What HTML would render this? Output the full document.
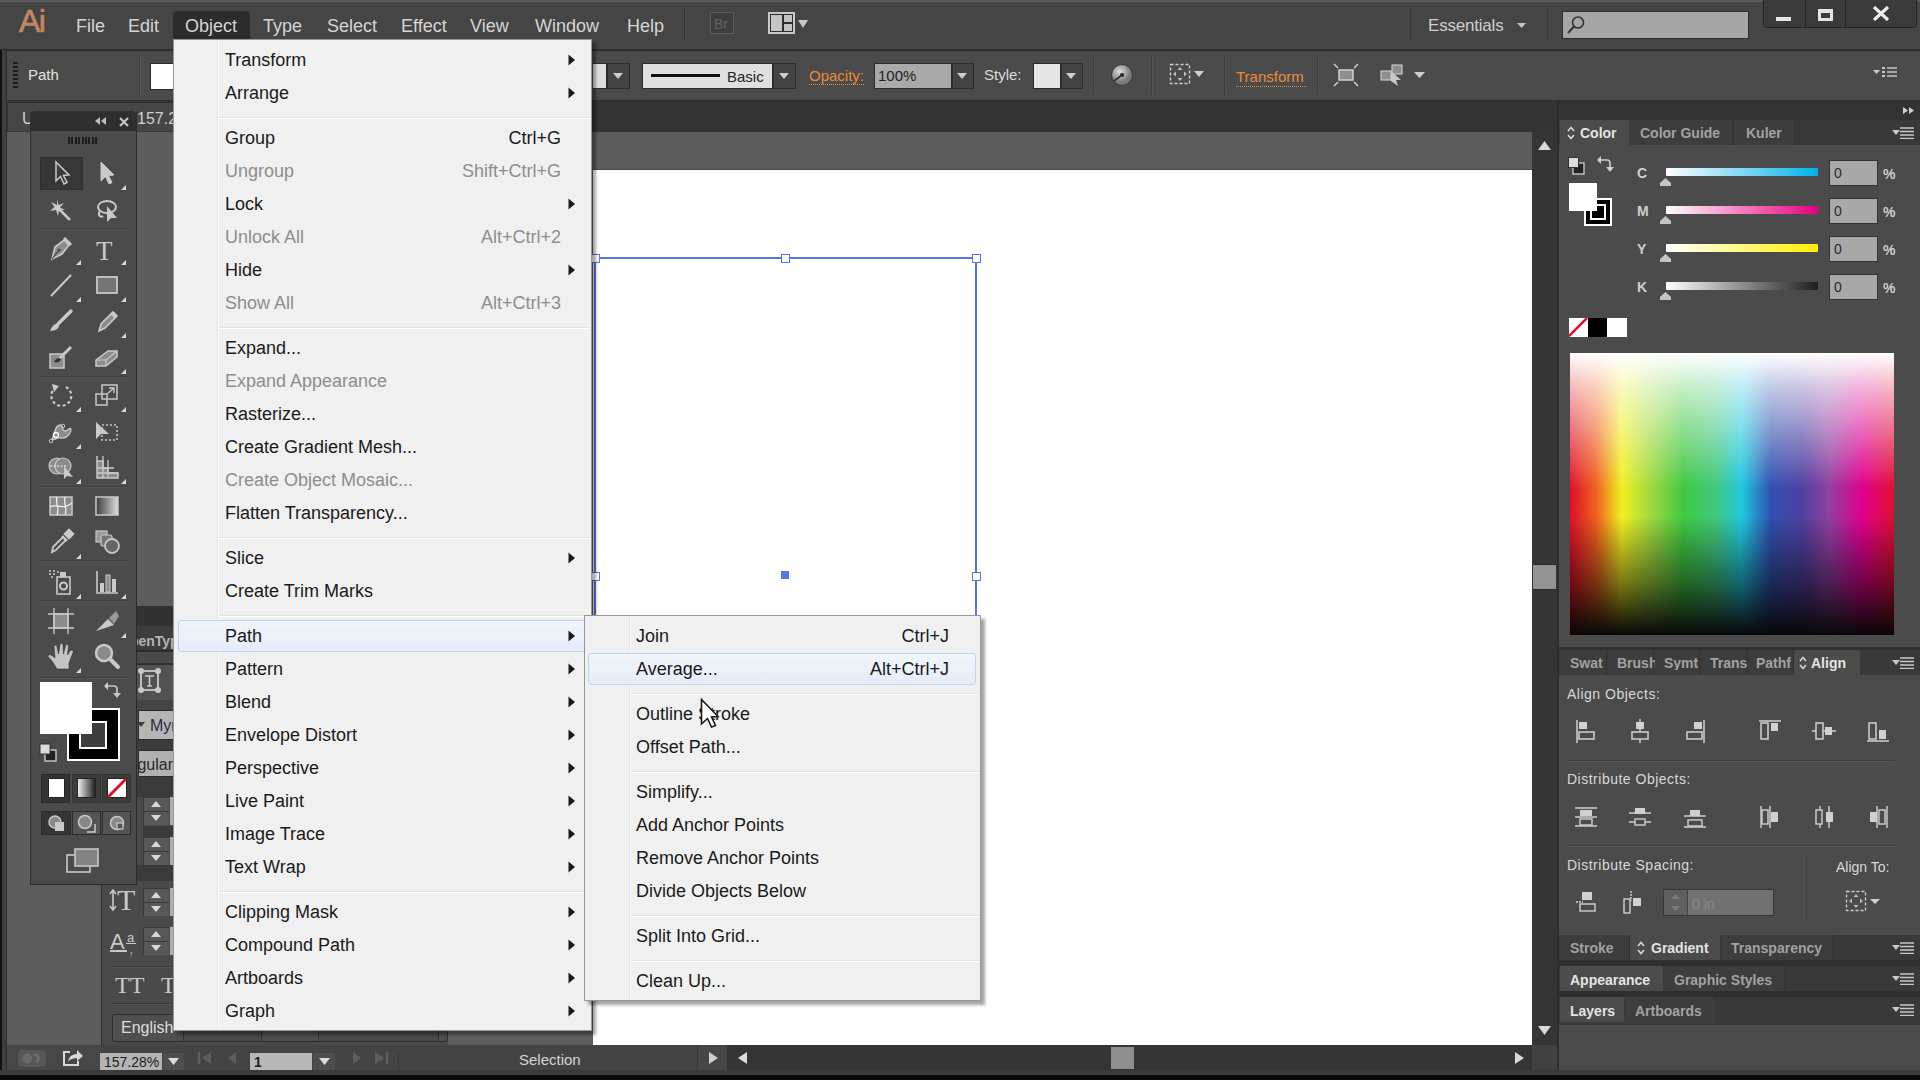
<!DOCTYPE html><html><head><meta charset="utf-8"><style>
*{margin:0;padding:0;box-sizing:border-box}
html,body{width:1920px;height:1080px;overflow:hidden;background:#3f3f3f;font-family:"Liberation Sans",sans-serif}
.a{position:absolute}
.t{position:absolute;white-space:nowrap}
</style></head><body><div class="a" style="left:0px;top:0px;width:1920px;height:1080px;background:#3f3f3f"></div>
<div class="a" style="left:0px;top:0px;width:2px;height:1080px;background:#111"></div>
<div class="a" style="left:6px;top:50px;width:1px;height:1025px;background:#2e2e2e"></div>
<div class="a" style="left:0px;top:0px;width:1920px;height:50px;background:#454545"></div>
<div class="a" style="left:0px;top:0px;width:1920px;height:2px;background:#5a5a5a"></div>
<div class="a" style="left:0px;top:49px;width:1920px;height:1px;background:#2e2e2e"></div>
<div class="a" style="left:7px;top:50px;width:1913px;height:1px;background:#2a2a2a"></div>
<div class="a" style="left:7px;top:51px;width:1913px;height:49px;background:#4b4b4b"></div>
<div class="a" style="left:7px;top:100px;width:1913px;height:1px;background:#2f2f2f"></div>
<div class="a" style="left:7px;top:101px;width:1551px;height:31px;background:#343434"></div>
<div class="a" style="left:8px;top:102px;width:400px;height:30px;background:#464646;border-top:1px solid #2c2c2c;border-bottom:1px solid #3a3a3a"></div>
<div class="a" style="left:7px;top:132px;width:1525px;height:913px;background:#5d5d5d"></div>
<div class="a" style="left:593px;top:169px;width:939px;height:1px;background:#4a4a4a"></div>
<div class="a" style="left:593px;top:170px;width:939px;height:875px;background:#ffffff"></div>
<div class="a" style="left:1532px;top:132px;width:25px;height:913px;background:#353535"></div>
<div class="a" style="left:1557px;top:101px;width:2px;height:969px;background:#2e2e2e"></div>
<div class="a" style="left:1559px;top:101px;width:361px;height:969px;background:#4b4b4b"></div>
<div class="a" style="left:7px;top:1045px;width:1550px;height:25px;background:#444444"></div>
<div class="a" style="left:0px;top:1070px;width:1920px;height:5px;background:#3a3a3a"></div>
<div class="a" style="left:0px;top:1075px;width:1920px;height:5px;background:#0a0a0a"></div>
<div class="t" style="left:19px;top:5.41px;font-size:32px;line-height:32px;color:#c48562;text-align:left;-webkit-text-stroke:0.7px #c48562;letter-spacing:-1.5px">Ai</div>
<div class="a" style="left:173px;top:11px;width:77px;height:28px;background:#2c2c2c;border-radius:4px 4px 0 0"></div>
<div class="t" style="left:76px;top:16.76px;font-size:18px;line-height:18px;color:#d5d5d5;text-align:left;">File</div>
<div class="t" style="left:128px;top:16.76px;font-size:18px;line-height:18px;color:#d5d5d5;text-align:left;">Edit</div>
<div class="t" style="left:185px;top:16.76px;font-size:18px;line-height:18px;color:#d5d5d5;text-align:left;">Object</div>
<div class="t" style="left:263px;top:16.76px;font-size:18px;line-height:18px;color:#d5d5d5;text-align:left;">Type</div>
<div class="t" style="left:327px;top:16.76px;font-size:18px;line-height:18px;color:#d5d5d5;text-align:left;">Select</div>
<div class="t" style="left:401px;top:16.76px;font-size:18px;line-height:18px;color:#d5d5d5;text-align:left;">Effect</div>
<div class="t" style="left:470px;top:16.76px;font-size:18px;line-height:18px;color:#d5d5d5;text-align:left;">View</div>
<div class="t" style="left:535px;top:16.76px;font-size:18px;line-height:18px;color:#d5d5d5;text-align:left;">Window</div>
<div class="t" style="left:627px;top:16.76px;font-size:18px;line-height:18px;color:#d5d5d5;text-align:left;">Help</div>
<div class="a" style="left:684px;top:8px;width:1px;height:32px;background:#303030"></div>
<div class="a" style="left:685px;top:8px;width:1px;height:32px;background:#4e4e4e"></div>
<div class="a" style="left:710px;top:12px;width:24px;height:22px;border:1px solid #5c5c5c;background:#3e3e3e"></div>
<div class="t" style="left:714px;top:17.15px;font-size:14px;line-height:14px;color:#626262;text-align:left;">Br</div>
<div class="a" style="left:768px;top:12px;width:27px;height:22px;border:2px solid #c8c8c8;background:#2e2e2e"></div>
<div class="a" style="left:771px;top:15px;width:11px;height:16px;background:#c4c4c4"></div>
<div class="a" style="left:784px;top:15px;width:8px;height:7px;background:#c4c4c4"></div>
<div class="a" style="left:784px;top:24px;width:8px;height:7px;background:#c4c4c4"></div>
<svg class="a" style="left:798px;top:20px;" width="11" height="9" viewBox="0 0 11 9"><path d="M0 0H10L5 8Z" fill="#c8c8c8"/></svg>
<div class="a" style="left:1410px;top:8px;width:1px;height:32px;background:#3a3a3a"></div>
<div class="t" style="left:1428px;top:17.11px;font-size:17px;line-height:17px;color:#cfcfcf;text-align:left;letter-spacing:-0.2px">Essentials</div>
<svg class="a" style="left:1517px;top:23px;" width="10" height="6" viewBox="0 0 10 6"><path d="M0 0H9L4.5 5Z" fill="#c8c8c8"/></svg>
<div class="a" style="left:1547px;top:8px;width:1px;height:32px;background:#3a3a3a"></div>
<div class="a" style="left:1562px;top:11px;width:187px;height:28px;background:#a6a6a6;border:1px solid #2e2e2e"></div>
<svg class="a" style="left:1565px;top:14px;" width="22" height="22" viewBox="0 0 22 22"><circle cx="13" cy="8.5" r="5.5" fill="none" stroke="#333" stroke-width="1.6"/><path d="M9 12.5L3 19" stroke="#333" stroke-width="2"/></svg>
<div class="a" style="left:1763px;top:0px;width:154px;height:28px;background:#3b3b3b;border:1px solid #262626;border-top:none;border-radius:0 0 4px 4px"></div>
<div class="a" style="left:1805px;top:0px;width:1px;height:27px;background:#262626"></div>
<div class="a" style="left:1845px;top:0px;width:1px;height:27px;background:#262626"></div>
<div class="a" style="left:1776px;top:17px;width:15px;height:4px;background:#e6e6e6"></div>
<div class="a" style="left:1818px;top:9px;width:15px;height:12px;border:3px solid #e6e6e6;border-top-width:4px"></div>
<svg class="a" style="left:1872px;top:6px;" width="18" height="15" viewBox="0 0 18 15"><path d="M2 1L16 14M16 1L2 14" stroke="#ececec" stroke-width="3.2"/></svg>
<div class="a" style="left:13px;top:62px;width:5px;height:2px;background:#1e1e1e"></div>
<div class="a" style="left:13px;top:66px;width:5px;height:2px;background:#1e1e1e"></div>
<div class="a" style="left:13px;top:70px;width:5px;height:2px;background:#1e1e1e"></div>
<div class="a" style="left:13px;top:74px;width:5px;height:2px;background:#1e1e1e"></div>
<div class="a" style="left:13px;top:78px;width:5px;height:2px;background:#1e1e1e"></div>
<div class="a" style="left:13px;top:82px;width:5px;height:2px;background:#1e1e1e"></div>
<div class="a" style="left:13px;top:86px;width:5px;height:2px;background:#1e1e1e"></div>
<div class="t" style="left:28px;top:67.30px;font-size:15px;line-height:15px;color:#e2e2e2;text-align:left;">Path</div>
<div class="a" style="left:139px;top:56px;width:1px;height:39px;background:#3e3e3e"></div>
<div class="a" style="left:140px;top:56px;width:1px;height:39px;background:#555"></div>
<div class="a" style="left:150px;top:63px;width:24px;height:27px;background:#ffffff;border:1px solid #2a2a2a"></div>
<div class="a" style="left:593px;top:63px;width:14px;height:26px;background:#dedede;border:1px solid #2a2a2a;border-left:none"></div>
<div class="a" style="left:607px;top:63px;width:23px;height:26px;background:#444;border:1px solid #2c2c2c"></div>
<svg class="a" style="left:613px;top:73px;" width="11" height="7" viewBox="0 0 11 7"><path d="M0 0H10L5 6Z" fill="#cfcfcf"/></svg>
<div class="a" style="left:642px;top:63px;width:131px;height:26px;background:#e0e0e0;border:1px solid #2a2a2a"></div>
<div class="a" style="left:651px;top:74px;width:69px;height:3px;background:#111"></div>
<div class="t" style="left:727px;top:69.30px;font-size:15px;line-height:15px;color:#1e1e1e;text-align:left;">Basic</div>
<div class="a" style="left:773px;top:63px;width:23px;height:26px;background:#444;border:1px solid #2c2c2c"></div>
<svg class="a" style="left:779px;top:73px;" width="11" height="7" viewBox="0 0 11 7"><path d="M0 0H10L5 6Z" fill="#cfcfcf"/></svg>
<div class="t" style="left:809px;top:68.30px;font-size:15px;line-height:15px;color:#e98c35;text-align:left;">Opacity:</div>
<div class="a" style="left:809px;top:84px;width:55px;height:1px;border-top:1px dotted #e98c35"></div>
<div class="a" style="left:874px;top:63px;width:78px;height:26px;background:#a9a9a9;border:1px solid #2a2a2a"></div>
<div class="t" style="left:878px;top:68.30px;font-size:15px;line-height:15px;color:#1e1e1e;text-align:left;">100%</div>
<div class="a" style="left:952px;top:63px;width:22px;height:26px;background:#444;border:1px solid #2c2c2c"></div>
<svg class="a" style="left:957px;top:73px;" width="11" height="7" viewBox="0 0 11 7"><path d="M0 0H10L5 6Z" fill="#cfcfcf"/></svg>
<div class="t" style="left:984px;top:67.30px;font-size:15px;line-height:15px;color:#dcdcdc;text-align:left;">Style:</div>
<div class="a" style="left:1033px;top:63px;width:28px;height:26px;background:#e6e6e6;border:1px solid #2a2a2a"></div>
<div class="a" style="left:1061px;top:63px;width:22px;height:26px;background:#444;border:1px solid #2c2c2c"></div>
<svg class="a" style="left:1066px;top:73px;" width="11" height="7" viewBox="0 0 11 7"><path d="M0 0H10L5 6Z" fill="#cfcfcf"/></svg>
<div class="a" style="left:1093px;top:56px;width:1px;height:39px;background:#3f3f3f"></div>
<div class="a" style="left:1094px;top:56px;width:1px;height:39px;background:#535353"></div>
<div class="a" style="left:1151px;top:56px;width:1px;height:39px;background:#3f3f3f"></div>
<div class="a" style="left:1152px;top:56px;width:1px;height:39px;background:#535353"></div>
<div class="a" style="left:1224px;top:56px;width:1px;height:39px;background:#3f3f3f"></div>
<div class="a" style="left:1225px;top:56px;width:1px;height:39px;background:#535353"></div>
<div class="a" style="left:1317px;top:56px;width:1px;height:39px;background:#3f3f3f"></div>
<div class="a" style="left:1318px;top:56px;width:1px;height:39px;background:#535353"></div>
<svg class="a" style="left:1110px;top:63px;" width="24" height="24" viewBox="0 0 24 24"><defs><radialGradient id="gl" cx="0.4" cy="0.35"><stop offset="0" stop-color="#e0e0e0"/><stop offset="1" stop-color="#7a7a7a"/></radialGradient></defs><circle cx="12" cy="12" r="10.5" fill="url(#gl)" stroke="#353535" stroke-width="1"/><circle cx="12" cy="12" r="2" fill="#222"/><path d="M12 12L4 18" stroke="#333" stroke-width="2"/></svg>
<svg class="a" style="left:1169px;top:63px;" width="38" height="22" viewBox="0 0 38 22"><rect x="1.5" y="1.5" width="19" height="19" fill="none" stroke="#cfcfcf" stroke-width="1.4" stroke-dasharray="3 2"/><path d="M11 4L8.5 7H13.5ZM11 18L8.5 15H13.5ZM4 11L7 8.5V13.5ZM18 11L15 8.5V13.5Z" fill="#bdbdbd"/><path d="M25 8H35L30 14Z" fill="#cfcfcf"/></svg>
<div class="t" style="left:1236px;top:69.30px;font-size:15px;line-height:15px;color:#e98c35;text-align:left;">Transform</div>
<div class="a" style="left:1236px;top:86px;width:71px;height:1px;border-top:1px dotted #e98c35"></div>
<svg class="a" style="left:1333px;top:63px;" width="26" height="24" viewBox="0 0 26 24"><rect x="6" y="7" width="14" height="10" fill="#8e8e8e" stroke="#d0d0d0" stroke-width="1.5"/><path d="M1 1L5 5M25 1L21 5M1 23L5 19M25 23L21 19" stroke="#d0d0d0" stroke-width="1.5"/></svg>
<svg class="a" style="left:1379px;top:63px;" width="50" height="26" viewBox="0 0 50 26"><rect x="2" y="8" width="10" height="9" fill="#8e8e8e" stroke="#c8c8c8" stroke-width="1.2"/><rect x="13" y="2" width="10" height="9" fill="#8e8e8e" stroke="#c8c8c8" stroke-width="1.2"/><path d="M12 8L22 17L17 17L19 23L12 18Z" fill="#c8c8c8"/><path d="M35 9H46L40.5 15Z" fill="#cfcfcf"/></svg>
<svg class="a" style="left:1873px;top:67px;" width="26" height="14" viewBox="0 0 26 14"><path d="M0 3H7L3.5 7Z" fill="#c8c8c8"/><path d="M9 1h3M9 5h3M9 9h3" stroke="#c8c8c8" stroke-width="2"/><path d="M14 1h10M14 5h10M14 9h10" stroke="#c8c8c8" stroke-width="1.5"/></svg>
<div class="t" style="left:22px;top:111.46px;font-size:16px;line-height:16px;color:#d0d0d0;text-align:left;">U</div>
<div class="t" style="left:137px;top:111.46px;font-size:16px;line-height:16px;color:#d0d0d0;text-align:left;">157.2</div>
<div class="a" style="left:594px;top:257px;width:383px;height:2px;background:#5574e8"></div>
<div class="a" style="left:594px;top:257px;width:2px;height:640px;background:#5574e8"></div>
<div class="a" style="left:975px;top:257px;width:2px;height:640px;background:#5574e8"></div>
<div class="a" style="left:591px;top:254px;width:9px;height:9px;background:#fff;border:1.5px solid #5574e8"></div>
<div class="a" style="left:781px;top:254px;width:9px;height:9px;background:#fff;border:1.5px solid #5574e8"></div>
<div class="a" style="left:972px;top:254px;width:9px;height:9px;background:#fff;border:1.5px solid #5574e8"></div>
<div class="a" style="left:591px;top:572px;width:9px;height:9px;background:#fff;border:1.5px solid #5574e8"></div>
<div class="a" style="left:972px;top:572px;width:9px;height:9px;background:#fff;border:1.5px solid #5574e8"></div>
<div class="a" style="left:781px;top:571px;width:8px;height:8px;background:#5574e8"></div>
<svg class="a" style="left:1537px;top:140px;" width="15" height="11" viewBox="0 0 15 11"><path d="M7.5 1L14 10H1Z" fill="#d8d8d8"/></svg>
<div class="a" style="left:1533px;top:564px;width:23px;height:26px;background:#2a2a2a"></div>
<div class="a" style="left:1533px;top:565px;width:23px;height:24px;background:#939393"></div>
<svg class="a" style="left:1537px;top:1025px;" width="15" height="11" viewBox="0 0 15 11"><path d="M1 1H14L7.5 10Z" fill="#d8d8d8"/></svg>
<div class="a" style="left:1532px;top:1045px;width:25px;height:25px;background:#414141"></div>
<div class="a" style="left:727px;top:1045px;width:805px;height:25px;background:#353535"></div>
<div class="a" style="left:1111px;top:1047px;width:23px;height:22px;background:#8f8f8f"></div>
<svg class="a" style="left:1514px;top:1051px;" width="11" height="14" viewBox="0 0 11 14"><path d="M1 1L10 7L1 13Z" fill="#d8d8d8"/></svg>
<div class="a" style="left:698px;top:1046px;width:28px;height:24px;background:#474747"></div>
<svg class="a" style="left:708px;top:1051px;" width="11" height="14" viewBox="0 0 11 14"><path d="M1 1L10 7L1 13Z" fill="#cfcfcf"/></svg>
<svg class="a" style="left:737px;top:1051px;" width="11" height="14" viewBox="0 0 11 14"><path d="M10 1L1 7L10 13Z" fill="#dcdcdc"/></svg>
<div class="a" style="left:697px;top:1046px;width:1px;height:24px;background:#383838"></div>
<div class="t" style="left:519px;top:1052.30px;font-size:15px;line-height:15px;color:#d6d6d6;text-align:left;">Selection</div>
<div class="a" style="left:398px;top:1046px;width:1px;height:24px;background:#383838"></div>
<div class="a" style="left:7px;top:1046px;width:94px;height:24px;background:#474747"></div>
<svg class="a" style="left:17px;top:1049px;" width="30" height="19" viewBox="0 0 30 19"><rect x="1" y="1" width="28" height="17" rx="4" fill="#575757"/><circle cx="10" cy="9.5" r="5" fill="#6a6a6a"/><path d="M17 6C22 5 23 11 19 13" stroke="#6e6e6e" stroke-width="2.5" fill="none"/></svg>
<svg class="a" style="left:62px;top:1049px;" width="22" height="18" viewBox="0 0 22 18"><path d="M8 3H2V16H16V12" fill="none" stroke="#d8d8d8" stroke-width="2"/><path d="M6 13C7 7 11 5 15 5V1L21 7L15 12V9C11 9 8 10 6 13Z" fill="#d8d8d8"/></svg>
<div class="a" style="left:100px;top:1053px;width:62px;height:17px;background:#b4b4b4"></div>
<div class="t" style="left:104px;top:1055.15px;font-size:14px;line-height:14px;color:#1e1e1e;text-align:left;">157.28%</div>
<div class="a" style="left:163px;top:1053px;width:21px;height:17px;background:#4e4e4e"></div>
<svg class="a" style="left:167px;top:1057px;" width="13" height="9" viewBox="0 0 13 9"><path d="M1 1H12L6.5 8Z" fill="#dcdcdc"/></svg>
<svg class="a" style="left:197px;top:1050px;" width="20" height="16" viewBox="0 0 20 16"><path d="M2 2V14" stroke="#5e5e5e" stroke-width="2.5"/><path d="M14 2L5 8L14 14Z" fill="#5e5e5e"/></svg>
<svg class="a" style="left:226px;top:1050px;" width="12" height="16" viewBox="0 0 12 16"><path d="M10 2L2 8L10 14Z" fill="#5e5e5e"/></svg>
<div class="a" style="left:250px;top:1053px;width:62px;height:17px;background:#b8b8b8"></div>
<div class="t" style="left:254px;top:1055.15px;font-size:14px;line-height:14px;color:#1e1e1e;text-align:left;font-weight:bold">1</div>
<div class="a" style="left:313px;top:1053px;width:22px;height:17px;background:#4e4e4e"></div>
<svg class="a" style="left:318px;top:1057px;" width="13" height="9" viewBox="0 0 13 9"><path d="M1 1H12L6.5 8Z" fill="#dcdcdc"/></svg>
<svg class="a" style="left:351px;top:1050px;" width="12" height="16" viewBox="0 0 12 16"><path d="M2 2L10 8L2 14Z" fill="#5e5e5e"/></svg>
<svg class="a" style="left:372px;top:1050px;" width="20" height="16" viewBox="0 0 20 16"><path d="M3 2L12 8L3 14Z" fill="#5e5e5e"/><path d="M15 2V14" stroke="#5e5e5e" stroke-width="2.5"/></svg>
<div class="a" style="left:1559px;top:101px;width:361px;height:19px;background:#333333"></div>
<svg class="a" style="left:1902px;top:106px;" width="13" height="9" viewBox="0 0 13 9"><path d="M1 1L6 4.5L1 8ZM7 1L12 4.5L7 8Z" fill="#d0d0d0"/></svg>
<div class="a" style="left:1559px;top:120px;width:361px;height:25px;background:#393939"></div>
<div class="a" style="left:1560px;top:120px;width:69px;height:25px;background:#4b4b4b"></div>
<div class="a" style="left:1629px;top:120px;width:104px;height:25px;background:#3d3d3d;border-right:1px solid #333"></div>
<div class="a" style="left:1734px;top:120px;width:61px;height:25px;background:#3d3d3d;border-right:1px solid #333"></div>
<svg class="a" style="left:1892px;top:127px;" width="23" height="12" viewBox="0 0 23 12"><path d="M0 3H8L4 8Z" fill="#c8c8c8"/><path d="M8 1H22M8 4.5H22M8 8H22M8 11.5H22" stroke="#c8c8c8" stroke-width="1.4"/></svg>
<svg class="a" style="left:1567px;top:126px;" width="8" height="14" viewBox="0 0 8 14"><path d="M1 5L4 1.5L7 5M1 9L4 12.5L7 9" fill="none" stroke="#d8d8d8" stroke-width="1.6"/></svg>
<div class="t" style="left:1580px;top:126.15px;font-size:14px;line-height:14px;color:#e4e4e4;text-align:left;font-weight:bold">Color</div>
<div class="t" style="left:1640px;top:126.15px;font-size:14px;line-height:14px;color:#a2a2a2;text-align:left;font-weight:bold">Color Guide</div>
<div class="t" style="left:1746px;top:126.15px;font-size:14px;line-height:14px;color:#a2a2a2;text-align:left;font-weight:bold">Kuler</div>
<div class="a" style="left:1559px;top:145px;width:361px;height:502px;background:#4b4b4b"></div>
<svg class="a" style="left:1567px;top:156px;" width="20" height="19" viewBox="0 0 20 19"><rect x="6" y="7" width="11" height="11" fill="#222" stroke="#cfcfcf" stroke-width="1.3"/><rect x="1.5" y="1.5" width="10" height="10" fill="#ddd" stroke="#333"/></svg>
<svg class="a" style="left:1596px;top:155px;" width="18" height="18" viewBox="0 0 18 18"><path d="M4 5H11C13 5 14 6 14 8V14" fill="none" stroke="#cfcfcf" stroke-width="1.6"/><path d="M1 5L5 1V9Z M10 12H18L14 17Z" fill="#cfcfcf"/></svg>
<div class="a" style="left:1584px;top:198px;width:28px;height:28px;background:#000;border:2px solid #fff"></div>
<div class="a" style="left:1590px;top:204px;width:16px;height:16px;border:2px solid #fff"></div>
<div class="a" style="left:1569px;top:183px;width:28px;height:28px;background:#fff"></div>
<div class="t" style="left:1637px;top:166.15px;font-size:14px;line-height:14px;color:#cfcfcf;text-align:left;font-weight:bold">C</div>
<div class="a" style="left:1666px;top:168px;width:152px;height:8px;background:linear-gradient(90deg,#fff,#00b2e8);border-radius:1px"></div>
<svg class="a" style="left:1659px;top:177px;" width="13" height="10" viewBox="0 0 13 10"><path d="M6.5 1L12 6V9H1V6Z" fill="#c4c4c4"/></svg>
<div class="a" style="left:1829px;top:160px;width:49px;height:26px;background:#a8a8a8;border:1px solid #333"></div>
<div class="t" style="left:1834px;top:166.15px;font-size:14px;line-height:14px;color:#2a2a2a;text-align:left;">0</div>
<div class="t" style="left:1883px;top:167.15px;font-size:14px;line-height:14px;color:#cfcfcf;text-align:left;font-weight:bold">%</div>
<div class="t" style="left:1637px;top:204.15px;font-size:14px;line-height:14px;color:#cfcfcf;text-align:left;font-weight:bold">M</div>
<div class="a" style="left:1666px;top:206px;width:152px;height:8px;background:linear-gradient(90deg,#fff,#e6007e);border-radius:1px"></div>
<svg class="a" style="left:1659px;top:215px;" width="13" height="10" viewBox="0 0 13 10"><path d="M6.5 1L12 6V9H1V6Z" fill="#c4c4c4"/></svg>
<div class="a" style="left:1829px;top:198px;width:49px;height:26px;background:#a8a8a8;border:1px solid #333"></div>
<div class="t" style="left:1834px;top:204.15px;font-size:14px;line-height:14px;color:#2a2a2a;text-align:left;">0</div>
<div class="t" style="left:1883px;top:205.15px;font-size:14px;line-height:14px;color:#cfcfcf;text-align:left;font-weight:bold">%</div>
<div class="t" style="left:1637px;top:242.15px;font-size:14px;line-height:14px;color:#cfcfcf;text-align:left;font-weight:bold">Y</div>
<div class="a" style="left:1666px;top:244px;width:152px;height:8px;background:linear-gradient(90deg,#fff,#fff000);border-radius:1px"></div>
<svg class="a" style="left:1659px;top:253px;" width="13" height="10" viewBox="0 0 13 10"><path d="M6.5 1L12 6V9H1V6Z" fill="#c4c4c4"/></svg>
<div class="a" style="left:1829px;top:236px;width:49px;height:26px;background:#a8a8a8;border:1px solid #333"></div>
<div class="t" style="left:1834px;top:242.15px;font-size:14px;line-height:14px;color:#2a2a2a;text-align:left;">0</div>
<div class="t" style="left:1883px;top:243.15px;font-size:14px;line-height:14px;color:#cfcfcf;text-align:left;font-weight:bold">%</div>
<div class="t" style="left:1637px;top:280.15px;font-size:14px;line-height:14px;color:#cfcfcf;text-align:left;font-weight:bold">K</div>
<div class="a" style="left:1666px;top:282px;width:152px;height:8px;background:linear-gradient(90deg,#fff,#1e1e1e);border-radius:1px"></div>
<svg class="a" style="left:1659px;top:291px;" width="13" height="10" viewBox="0 0 13 10"><path d="M6.5 1L12 6V9H1V6Z" fill="#c4c4c4"/></svg>
<div class="a" style="left:1829px;top:274px;width:49px;height:26px;background:#a8a8a8;border:1px solid #333"></div>
<div class="t" style="left:1834px;top:280.15px;font-size:14px;line-height:14px;color:#2a2a2a;text-align:left;">0</div>
<div class="t" style="left:1883px;top:281.15px;font-size:14px;line-height:14px;color:#cfcfcf;text-align:left;font-weight:bold">%</div>
<svg class="a" style="left:1569px;top:318px;" width="58" height="19" viewBox="0 0 58 19"><rect x="0" y="0" width="19" height="19" fill="#fff"/><path d="M0 18L18 0" stroke="#e0102a" stroke-width="2.5"/><rect x="19" y="0" width="19" height="19" fill="#000"/><rect x="38" y="0" width="20" height="19" fill="#fff"/></svg>
<div class="a" style="left:1570px;top:353px;width:324px;height:282px;background:linear-gradient(to bottom,#ffffff 0%,rgba(255,255,255,0.7) 12%,rgba(255,255,255,0) 48%,rgba(0,0,0,0) 58%,rgba(0,0,0,0.5) 82%,#080808 100%),linear-gradient(90deg,#e0102a 0%,#f06020 8%,#f0f020 16%,#a0d840 25%,#40c840 35%,#40c880 45%,#20c8e0 53%,#3050b0 62%,#5040a0 72%,#9040a0 80%,#e00090 90%,#e01030 100%)"></div>
<div class="a" style="left:1559px;top:647px;width:361px;height:3px;background:#303030"></div>
<div class="a" style="left:1559px;top:650px;width:361px;height:25px;background:#393939"></div>
<div class="a" style="left:1560px;top:650px;width:47px;height:25px;background:#3d3d3d;border-right:1px solid #333"></div>
<div class="a" style="left:1608px;top:650px;width:46px;height:25px;background:#3d3d3d;border-right:1px solid #333"></div>
<div class="a" style="left:1655px;top:650px;width:45px;height:25px;background:#3d3d3d;border-right:1px solid #333"></div>
<div class="a" style="left:1701px;top:650px;width:46px;height:25px;background:#3d3d3d;border-right:1px solid #333"></div>
<div class="a" style="left:1748px;top:650px;width:46px;height:25px;background:#3d3d3d;border-right:1px solid #333"></div>
<div class="a" style="left:1794px;top:650px;width:66px;height:25px;background:#4b4b4b"></div>
<svg class="a" style="left:1892px;top:657px;" width="23" height="12" viewBox="0 0 23 12"><path d="M0 3H8L4 8Z" fill="#c8c8c8"/><path d="M8 1H22M8 4.5H22M8 8H22M8 11.5H22" stroke="#c8c8c8" stroke-width="1.4"/></svg>
<div class="t" style="left:1570px;top:656.15px;font-size:14px;line-height:14px;color:#a2a2a2;text-align:left;font-weight:bold;overflow:hidden;width:38px">Swat</div>
<div class="t" style="left:1617px;top:656.15px;font-size:14px;line-height:14px;color:#a2a2a2;text-align:left;font-weight:bold;overflow:hidden;width:38px">Brush</div>
<div class="t" style="left:1664px;top:656.15px;font-size:14px;line-height:14px;color:#a2a2a2;text-align:left;font-weight:bold;overflow:hidden;width:38px">Symt</div>
<div class="t" style="left:1710px;top:656.15px;font-size:14px;line-height:14px;color:#a2a2a2;text-align:left;font-weight:bold;overflow:hidden;width:38px">Trans</div>
<div class="t" style="left:1756px;top:656.15px;font-size:14px;line-height:14px;color:#a2a2a2;text-align:left;font-weight:bold;overflow:hidden;width:38px">Pathf</div>
<svg class="a" style="left:1799px;top:656px;" width="8" height="14" viewBox="0 0 8 14"><path d="M1 5L4 1.5L7 5M1 9L4 12.5L7 9" fill="none" stroke="#d8d8d8" stroke-width="1.6"/></svg>
<div class="t" style="left:1811px;top:656.15px;font-size:14px;line-height:14px;color:#e4e4e4;text-align:left;font-weight:bold">Align</div>
<div class="a" style="left:1559px;top:675px;width:361px;height:260px;background:#4b4b4b"></div>
<div class="t" style="left:1567px;top:687.15px;font-size:14px;line-height:14px;color:#d8d8d8;text-align:left;letter-spacing:0.5px">Align Objects:</div>
<div class="t" style="left:1567px;top:772.15px;font-size:14px;line-height:14px;color:#d8d8d8;text-align:left;letter-spacing:0.5px">Distribute Objects:</div>
<div class="t" style="left:1567px;top:858.15px;font-size:14px;line-height:14px;color:#d8d8d8;text-align:left;letter-spacing:0.5px">Distribute Spacing:</div>
<div class="t" style="left:1836px;top:860.15px;font-size:14px;line-height:14px;color:#d8d8d8;text-align:left;">Align To:</div>
<div class="a" style="left:1568px;top:760px;width:327px;height:1px;background:#3c3c3c"></div>
<div class="a" style="left:1568px;top:761px;width:327px;height:1px;background:#575757"></div>
<div class="a" style="left:1568px;top:845px;width:327px;height:1px;background:#3c3c3c"></div>
<div class="a" style="left:1568px;top:846px;width:327px;height:1px;background:#575757"></div>
<div class="a" style="left:1806px;top:855px;width:1px;height:65px;background:#3f3f3f"></div>
<svg class="a" style="left:1573px;top:718px;" width="26" height="26" viewBox="0 0 26 26"><path d="M4 2V25" stroke="#d0d0d0" stroke-width="1.5"/><rect x="6" y="4" width="8" height="7" fill="#d0d0d0"/><rect x="6" y="14" width="15" height="7" fill="none" stroke="#d0d0d0" stroke-width="1.5"/></svg>
<svg class="a" style="left:1627px;top:718px;" width="26" height="26" viewBox="0 0 26 26"><path d="M13 1V25" stroke="#d0d0d0" stroke-width="1.5"/><rect x="9" y="4" width="8" height="7" fill="#d0d0d0"/><rect x="5" y="14" width="16" height="7" fill="#4b4b4b" stroke="#d0d0d0" stroke-width="1.5"/></svg>
<svg class="a" style="left:1682px;top:718px;" width="26" height="26" viewBox="0 0 26 26"><path d="M22 2V25" stroke="#d0d0d0" stroke-width="1.5"/><rect x="12" y="4" width="8" height="7" fill="#d0d0d0"/><rect x="5" y="14" width="15" height="7" fill="none" stroke="#d0d0d0" stroke-width="1.5"/></svg>
<svg class="a" style="left:1757px;top:718px;" width="26" height="26" viewBox="0 0 26 26"><path d="M2 3H24" stroke="#d0d0d0" stroke-width="1.5"/><rect x="4" y="5" width="7" height="16" fill="none" stroke="#d0d0d0" stroke-width="1.5"/><rect x="14" y="5" width="7" height="8" fill="#d0d0d0"/></svg>
<svg class="a" style="left:1811px;top:718px;" width="26" height="26" viewBox="0 0 26 26"><path d="M1 13H25" stroke="#d0d0d0" stroke-width="1.5"/><rect x="5" y="5" width="7" height="16" fill="#4b4b4b" stroke="#d0d0d0" stroke-width="1.5"/><rect x="14" y="9" width="7" height="8" fill="#d0d0d0"/></svg>
<svg class="a" style="left:1865px;top:718px;" width="26" height="26" viewBox="0 0 26 26"><path d="M2 23H24" stroke="#d0d0d0" stroke-width="1.5"/><rect x="4" y="5" width="7" height="16" fill="none" stroke="#d0d0d0" stroke-width="1.5"/><rect x="14" y="12" width="7" height="9" fill="#d0d0d0"/></svg>
<svg class="a" style="left:1573px;top:804px;" width="26" height="26" viewBox="0 0 26 26"><path d="M2 4H24M2 13H24M2 22H24" stroke="#d0d0d0" stroke-width="1.4"/><rect x="7" y="6" width="12" height="6" fill="#d0d0d0"/><rect x="7" y="15" width="12" height="6" fill="none" stroke="#d0d0d0" stroke-width="1.4"/></svg>
<svg class="a" style="left:1627px;top:804px;" width="26" height="26" viewBox="0 0 26 26"><path d="M2 9H24M2 18H24" stroke="#d0d0d0" stroke-width="1.4"/><rect x="8" y="4" width="10" height="6" fill="#d0d0d0"/><rect x="8" y="15" width="10" height="6" fill="#4b4b4b" stroke="#d0d0d0" stroke-width="1.4"/></svg>
<svg class="a" style="left:1682px;top:804px;" width="26" height="26" viewBox="0 0 26 26"><path d="M2 12H24M2 23H24" stroke="#d0d0d0" stroke-width="1.4"/><rect x="8" y="6" width="10" height="6" fill="#d0d0d0"/><rect x="6" y="16" width="14" height="6" fill="none" stroke="#d0d0d0" stroke-width="1.4"/></svg>
<svg class="a" style="left:1757px;top:804px;" width="26" height="26" viewBox="0 0 26 26"><path d="M4 2V24M13 2V24" stroke="#d0d0d0" stroke-width="1.4"/><rect x="5" y="6" width="6" height="14" fill="none" stroke="#d0d0d0" stroke-width="1.4"/><rect x="14" y="8" width="7" height="10" fill="#d0d0d0"/></svg>
<svg class="a" style="left:1811px;top:804px;" width="26" height="26" viewBox="0 0 26 26"><path d="M9 2V24M18 2V24" stroke="#d0d0d0" stroke-width="1.4"/><rect x="5" y="6" width="6" height="14" fill="#4b4b4b" stroke="#d0d0d0" stroke-width="1.4"/><rect x="15" y="8" width="7" height="10" fill="#d0d0d0"/></svg>
<svg class="a" style="left:1865px;top:804px;" width="26" height="26" viewBox="0 0 26 26"><path d="M12 2V24M22 2V24" stroke="#d0d0d0" stroke-width="1.4"/><rect x="14" y="6" width="6" height="14" fill="none" stroke="#d0d0d0" stroke-width="1.4"/><rect x="5" y="8" width="7" height="10" fill="#d0d0d0"/></svg>
<svg class="a" style="left:1574px;top:889px;" width="26" height="26" viewBox="0 0 26 26"><path d="M2 13H9" stroke="#d0d0d0" stroke-width="1.4" stroke-dasharray="2 1"/><rect x="8" y="3" width="10" height="8" fill="#d0d0d0"/><rect x="6" y="15" width="15" height="7" fill="none" stroke="#d0d0d0" stroke-width="1.4"/></svg>
<svg class="a" style="left:1620px;top:889px;" width="26" height="26" viewBox="0 0 26 26"><path d="M11 2V12" stroke="#d0d0d0" stroke-width="1.4" stroke-dasharray="2 1"/><rect x="4" y="10" width="6" height="14" fill="none" stroke="#d0d0d0" stroke-width="1.4"/><rect x="13" y="9" width="8" height="8" fill="#d0d0d0"/></svg>
<div class="a" style="left:1663px;top:889px;width:111px;height:27px;background:#717171;border:1px solid #383838"></div>
<div class="a" style="left:1664px;top:890px;width:24px;height:25px;background:#5f5f5f;border-right:1px solid #444"></div>
<svg class="a" style="left:1669px;top:892px;" width="13" height="21" viewBox="0 0 13 21"><path d="M6.5 2L11 7H2Z M2 14H11L6.5 19Z" fill="#7c7c7c"/></svg>
<div class="t" style="left:1692px;top:897.15px;font-size:14px;line-height:14px;color:#8a8a8a;text-align:left;">0 in</div>
<svg class="a" style="left:1845px;top:890px;" width="38" height="24" viewBox="0 0 38 24"><rect x="1.5" y="1.5" width="19" height="19" fill="none" stroke="#cfcfcf" stroke-width="1.3" stroke-dasharray="3 2"/><path d="M11 4L8.5 7H13.5ZM11 18L8.5 15H13.5ZM4 11L7 8.5V13.5ZM18 11L15 8.5V13.5Z" fill="#bdbdbd"/><path d="M25 9H35L30 14Z" fill="#cfcfcf"/></svg>
<div class="a" style="left:1559px;top:935px;width:361px;height:0px;"></div>
<div class="a" style="left:1559px;top:935px;width:361px;height:25px;background:#393939"></div>
<div class="a" style="left:1560px;top:935px;width:70px;height:25px;background:#3d3d3d;border-right:1px solid #333"></div>
<div class="a" style="left:1630px;top:935px;width:90px;height:25px;background:#4b4b4b"></div>
<div class="a" style="left:1721px;top:935px;width:112px;height:25px;background:#3d3d3d;border-right:1px solid #333"></div>
<svg class="a" style="left:1892px;top:942px;" width="23" height="12" viewBox="0 0 23 12"><path d="M0 3H8L4 8Z" fill="#c8c8c8"/><path d="M8 1H22M8 4.5H22M8 8H22M8 11.5H22" stroke="#c8c8c8" stroke-width="1.4"/></svg>
<div class="t" style="left:1570px;top:941.15px;font-size:14px;line-height:14px;color:#a2a2a2;text-align:left;font-weight:bold">Stroke</div>
<svg class="a" style="left:1637px;top:941px;" width="8" height="14" viewBox="0 0 8 14"><path d="M1 5L4 1.5L7 5M1 9L4 12.5L7 9" fill="none" stroke="#d8d8d8" stroke-width="1.6"/></svg>
<div class="t" style="left:1651px;top:941.15px;font-size:14px;line-height:14px;color:#e4e4e4;text-align:left;font-weight:bold">Gradient</div>
<div class="t" style="left:1731px;top:941.15px;font-size:14px;line-height:14px;color:#a2a2a2;text-align:left;font-weight:bold">Transparency</div>
<div class="a" style="left:1559px;top:960px;width:361px;height:6px;background:#2f2f2f"></div>
<div class="a" style="left:1559px;top:966px;width:361px;height:25px;background:#393939"></div>
<div class="a" style="left:1560px;top:966px;width:103px;height:25px;background:#4b4b4b"></div>
<div class="a" style="left:1664px;top:966px;width:121px;height:25px;background:#3d3d3d;border-right:1px solid #333"></div>
<svg class="a" style="left:1892px;top:973px;" width="23" height="12" viewBox="0 0 23 12"><path d="M0 3H8L4 8Z" fill="#c8c8c8"/><path d="M8 1H22M8 4.5H22M8 8H22M8 11.5H22" stroke="#c8c8c8" stroke-width="1.4"/></svg>
<div class="t" style="left:1570px;top:973.15px;font-size:14px;line-height:14px;color:#e4e4e4;text-align:left;font-weight:bold">Appearance</div>
<div class="t" style="left:1674px;top:973.15px;font-size:14px;line-height:14px;color:#a2a2a2;text-align:left;font-weight:bold">Graphic Styles</div>
<div class="a" style="left:1559px;top:991px;width:361px;height:6px;background:#2f2f2f"></div>
<div class="a" style="left:1559px;top:997px;width:361px;height:25px;background:#393939"></div>
<div class="a" style="left:1560px;top:997px;width:64px;height:25px;background:#4b4b4b"></div>
<div class="a" style="left:1625px;top:997px;width:91px;height:25px;background:#3d3d3d;border-right:1px solid #333"></div>
<svg class="a" style="left:1892px;top:1004px;" width="23" height="12" viewBox="0 0 23 12"><path d="M0 3H8L4 8Z" fill="#c8c8c8"/><path d="M8 1H22M8 4.5H22M8 8H22M8 11.5H22" stroke="#c8c8c8" stroke-width="1.4"/></svg>
<div class="t" style="left:1570px;top:1004.15px;font-size:14px;line-height:14px;color:#e4e4e4;text-align:left;font-weight:bold">Layers</div>
<div class="t" style="left:1635px;top:1004.15px;font-size:14px;line-height:14px;color:#a2a2a2;text-align:left;font-weight:bold">Artboards</div>
<div class="a" style="left:1559px;top:1022px;width:361px;height:48px;background:#4b4b4b"></div>
<div class="a" style="left:1559px;top:1022px;width:361px;height:3px;background:#3b3b3b"></div>
<div class="a" style="left:101px;top:606px;width:347px;height:446px;background:#4a4a4a;border-left:1px solid #2c2c2c"></div>
<div class="a" style="left:101px;top:606px;width:347px;height:20px;background:#323232"></div>
<div class="a" style="left:101px;top:626px;width:347px;height:24px;background:#3d3d3d"></div>
<div class="t" style="left:119px;top:634.15px;font-size:14px;line-height:14px;color:#b4b4b4;text-align:left;font-weight:bold">OpenType</div>
<div class="a" style="left:101px;top:650px;width:347px;height:2px;background:#2c2c2c"></div>
<div class="a" style="left:101px;top:663px;width:347px;height:2px;background:#2f2f2f"></div>
<div class="a" style="left:101px;top:665px;width:347px;height:35px;background:#525252"></div>
<svg class="a" style="left:137px;top:667px;" width="25" height="27" viewBox="0 0 25 27"><rect x="4" y="4" width="17" height="19" fill="none" stroke="#c9c9c9" stroke-width="1.8"/><circle cx="4" cy="4" r="3" fill="#c9c9c9"/><circle cx="21" cy="4" r="3" fill="#c9c9c9"/><circle cx="4" cy="23" r="3" fill="#c9c9c9"/><circle cx="21" cy="23" r="3" fill="#c9c9c9"/><path d="M8 9H17M12.5 9V19M10 19H15" stroke="#c9c9c9" stroke-width="1.6"/></svg>
<div class="a" style="left:101px;top:700px;width:347px;height:10px;background:#454545"></div>
<div class="a" style="left:138px;top:710px;width:310px;height:30px;background:#b5b5b5;border:1px solid #2c2c2c"></div>
<svg class="a" style="left:136px;top:719px;" width="10" height="12" viewBox="0 0 10 12"><path d="M1 3L9 3L5 8Z" fill="#3a3a3a"/></svg>
<div class="t" style="left:150px;top:718.46px;font-size:16px;line-height:16px;color:#2a2a3a;text-align:left;">Myriad Pro</div>
<div class="a" style="left:101px;top:740px;width:347px;height:10px;background:#3c3c3c"></div>
<div class="a" style="left:138px;top:750px;width:310px;height:27px;background:#b0b0b0;border:1px solid #2c2c2c"></div>
<div class="t" style="left:117px;top:757.46px;font-size:16px;line-height:16px;color:#2a2a2a;text-align:left;">Regular</div>
<div class="a" style="left:101px;top:777px;width:347px;height:20px;background:#3b3b3b"></div>
<div class="a" style="left:143px;top:826px;width:305px;height:11px;background:#3b3b3b"></div>
<div class="a" style="left:143px;top:797px;width:26px;height:28px;background:#3a3a3a"></div>
<div class="a" style="left:144px;top:798px;width:25px;height:13px;background:#585858"></div>
<div class="a" style="left:144px;top:812px;width:25px;height:13px;background:#585858"></div>
<svg class="a" style="left:150px;top:800px;" width="12" height="9" viewBox="0 0 12 9"><path d="M6 1L11 7H1Z" fill="#d8d8d8"/></svg>
<svg class="a" style="left:150px;top:814px;" width="12" height="9" viewBox="0 0 12 9"><path d="M1 1H11L6 7Z" fill="#d8d8d8"/></svg>
<div class="a" style="left:170px;top:797px;width:6px;height:28px;background:#b0b0b0"></div>
<div class="a" style="left:143px;top:837px;width:26px;height:28px;background:#3a3a3a"></div>
<div class="a" style="left:144px;top:838px;width:25px;height:13px;background:#585858"></div>
<div class="a" style="left:144px;top:852px;width:25px;height:13px;background:#585858"></div>
<svg class="a" style="left:150px;top:840px;" width="12" height="9" viewBox="0 0 12 9"><path d="M6 1L11 7H1Z" fill="#d8d8d8"/></svg>
<svg class="a" style="left:150px;top:854px;" width="12" height="9" viewBox="0 0 12 9"><path d="M1 1H11L6 7Z" fill="#d8d8d8"/></svg>
<div class="a" style="left:170px;top:837px;width:6px;height:28px;background:#b0b0b0"></div>
<div class="a" style="left:143px;top:888px;width:26px;height:28px;background:#3a3a3a"></div>
<div class="a" style="left:144px;top:889px;width:25px;height:13px;background:#585858"></div>
<div class="a" style="left:144px;top:903px;width:25px;height:13px;background:#585858"></div>
<svg class="a" style="left:150px;top:891px;" width="12" height="9" viewBox="0 0 12 9"><path d="M6 1L11 7H1Z" fill="#d8d8d8"/></svg>
<svg class="a" style="left:150px;top:905px;" width="12" height="9" viewBox="0 0 12 9"><path d="M1 1H11L6 7Z" fill="#d8d8d8"/></svg>
<div class="a" style="left:170px;top:888px;width:6px;height:28px;background:#b0b0b0"></div>
<div class="a" style="left:143px;top:927px;width:26px;height:28px;background:#3a3a3a"></div>
<div class="a" style="left:144px;top:928px;width:25px;height:13px;background:#585858"></div>
<div class="a" style="left:144px;top:942px;width:25px;height:13px;background:#585858"></div>
<svg class="a" style="left:150px;top:930px;" width="12" height="9" viewBox="0 0 12 9"><path d="M6 1L11 7H1Z" fill="#d8d8d8"/></svg>
<svg class="a" style="left:150px;top:944px;" width="12" height="9" viewBox="0 0 12 9"><path d="M1 1H11L6 7Z" fill="#d8d8d8"/></svg>
<div class="a" style="left:170px;top:927px;width:6px;height:28px;background:#b0b0b0"></div>
<div class="a" style="left:101px;top:865px;width:347px;height:16px;background:#3b3b3b"></div>
<div class="a" style="left:101px;top:826px;width:36px;height:10px;background:#3b3b3b"></div>
<div class="t" style="left:117px;top:884.61px;font-size:30px;line-height:30px;color:#c9c9c9;text-align:left;font-family:\"Liberation Serif\",serif">T</div>
<svg class="a" style="left:108px;top:889px;" width="10" height="22" viewBox="0 0 10 22"><path d="M5 1V21M2 5L5 1L8 5M2 17L5 21L8 17" stroke="#c9c9c9" stroke-width="1.6" fill="none"/></svg>
<div class="t" style="left:110px;top:931.38px;font-size:22px;line-height:22px;color:#c9c9c9;text-align:left;">A</div>
<div class="t" style="left:127px;top:931.00px;font-size:13px;line-height:13px;color:#c9c9c9;text-align:left;">a</div>
<div class="a" style="left:110px;top:950px;width:17px;height:2px;background:#c9c9c9"></div>
<div class="a" style="left:126px;top:943px;width:10px;height:1px;background:#c9c9c9"></div>
<div class="t" style="left:129px;top:950.38px;font-size:9px;line-height:9px;color:#c9c9c9;text-align:left;">↑</div>
<div class="a" style="left:110px;top:966px;width:63px;height:1px;background:#3a3a3a"></div>
<div class="a" style="left:110px;top:967px;width:63px;height:1px;background:#555"></div>
<div class="t" style="left:115px;top:972.68px;font-size:24px;line-height:24px;color:#c9c9c9;text-align:left;font-family:\"Liberation Serif\",serif">TT</div>
<div class="t" style="left:161px;top:972.68px;font-size:24px;line-height:24px;color:#c9c9c9;text-align:left;font-family:\"Liberation Serif\",serif">T</div>
<div class="a" style="left:110px;top:1003px;width:63px;height:1px;background:#3a3a3a"></div>
<div class="a" style="left:110px;top:1004px;width:63px;height:1px;background:#555"></div>
<div class="a" style="left:112px;top:1014px;width:336px;height:28px;background:#4f4f4f;border:1px solid #2e2e2e;border-radius:2px"></div>
<div class="t" style="left:121px;top:1020.46px;font-size:16px;line-height:16px;color:#dcdcdc;text-align:left;">English</div>
<div class="a" style="left:183px;top:1030px;width:79px;height:12px;border:1px solid #333;border-top:none;background:#4a4a4a"></div>
<div class="a" style="left:318px;top:1030px;width:121px;height:12px;border:1px solid #333;border-top:none;background:#4a4a4a"></div>
<div class="a" style="left:101px;top:1045px;width:347px;height:7px;background:#444"></div>
<div class="a" style="left:30px;top:111px;width:107px;height:774px;background:#4b4b4b;border:1px solid #2b2b2b;border-top:none"></div>
<div class="a" style="left:30px;top:111px;width:107px;height:20px;background:#2f2f2f;border-radius:5px 5px 0 0"></div>
<svg class="a" style="left:94px;top:116px;" width="14" height="10" viewBox="0 0 14 10"><path d="M6 1L1 5L6 9ZM12 1L7 5L12 9Z" fill="#bdbdbd"/></svg>
<svg class="a" style="left:119px;top:117px;" width="10" height="10" viewBox="0 0 10 10"><path d="M1 1L9 9M9 1L1 9" stroke="#c8c8c8" stroke-width="2"/></svg>
<div class="a" style="left:68.0px;top:137px;width:2px;height:7px;background:#1c1c1c"></div>
<div class="a" style="left:71.4px;top:137px;width:2px;height:7px;background:#1c1c1c"></div>
<div class="a" style="left:74.8px;top:137px;width:2px;height:7px;background:#1c1c1c"></div>
<div class="a" style="left:78.2px;top:137px;width:2px;height:7px;background:#1c1c1c"></div>
<div class="a" style="left:81.6px;top:137px;width:2px;height:7px;background:#1c1c1c"></div>
<div class="a" style="left:85.0px;top:137px;width:2px;height:7px;background:#1c1c1c"></div>
<div class="a" style="left:88.4px;top:137px;width:2px;height:7px;background:#1c1c1c"></div>
<div class="a" style="left:91.8px;top:137px;width:2px;height:7px;background:#1c1c1c"></div>
<div class="a" style="left:95.2px;top:137px;width:2px;height:7px;background:#1c1c1c"></div>
<div class="a" style="left:40px;top:228px;width:88px;height:1px;background:#3e3e3e"></div>
<div class="a" style="left:40px;top:229px;width:88px;height:1px;background:#555"></div>
<div class="a" style="left:40px;top:376px;width:88px;height:1px;background:#3e3e3e"></div>
<div class="a" style="left:40px;top:377px;width:88px;height:1px;background:#555"></div>
<div class="a" style="left:40px;top:486px;width:88px;height:1px;background:#3e3e3e"></div>
<div class="a" style="left:40px;top:487px;width:88px;height:1px;background:#555"></div>
<div class="a" style="left:40px;top:560px;width:88px;height:1px;background:#3e3e3e"></div>
<div class="a" style="left:40px;top:561px;width:88px;height:1px;background:#555"></div>
<div class="a" style="left:40px;top:600px;width:88px;height:1px;background:#3e3e3e"></div>
<div class="a" style="left:40px;top:601px;width:88px;height:1px;background:#555"></div>
<div class="a" style="left:40px;top:677px;width:88px;height:1px;background:#3e3e3e"></div>
<div class="a" style="left:40px;top:678px;width:88px;height:1px;background:#555"></div>
<div class="a" style="left:40px;top:157px;width:43px;height:33px;background:#363636;border:1px solid #2e2e2e"></div>
<svg class="a" style="left:46px;top:158px;" width="30" height="30" viewBox="0 0 30 30"><path d="M10 4L10 23L14.5 18.5L18 26L21 24.5L17.5 17.5L23 17Z" fill="#3a3a3a" stroke="#c9c9c9" stroke-width="1.5"/></svg>
<svg class="a" style="left:92px;top:158px;" width="30" height="30" viewBox="0 0 30 30"><path d="M9 4L9 23L13.5 18.5L17 26L20 24.5L16.5 17.5L22 17Z" fill="#c9c9c9" stroke="#c9c9c9" stroke-width="1"/></svg>
<svg class="a" style="left:121px;top:185px;" width="6" height="6" viewBox="0 0 6 6"><path d="M5 0V5H0Z" fill="#d8d8d8"/></svg>
<svg class="a" style="left:46px;top:196px;" width="30" height="30" viewBox="0 0 30 30"><path d="M12 12L24 24" stroke="#c9c9c9" stroke-width="2.5"/><path d="M11 3L12.5 9L18 7L14 11.5L19 14L13 14L12 20L10 14L4 15L8.5 11L5 6L11 9Z" fill="#c9c9c9"/></svg>
<svg class="a" style="left:92px;top:196px;" width="30" height="30" viewBox="0 0 30 30"><ellipse cx="15" cy="11" rx="9" ry="6" fill="none" stroke="#c9c9c9" stroke-width="2"/><path d="M8 15C5 19 9 22 11 20" fill="none" stroke="#c9c9c9" stroke-width="2"/><path d="M15 10L15 26L19 22L25 22Z" fill="#c9c9c9"/></svg>
<svg class="a" style="left:46px;top:233px;" width="30" height="30" viewBox="0 0 30 30"><path d="M6 26L9 14L18 7L23 12L16 21Z" fill="#8c8c8c" stroke="#c9c9c9" stroke-width="1.6"/><path d="M18 5L25 12" stroke="#c9c9c9" stroke-width="3"/><path d="M6 26L13 17" stroke="#444" stroke-width="1.2"/><circle cx="13" cy="17" r="1.5" fill="#444"/></svg>
<svg class="a" style="left:76px;top:260px;" width="6" height="6" viewBox="0 0 6 6"><path d="M5 0V5H0Z" fill="#d8d8d8"/></svg>
<div class="t" style="left:96px;top:238.14px;font-size:27px;line-height:27px;color:#c9c9c9;text-align:left;font-family:\"Liberation Serif\",serif">T</div>
<svg class="a" style="left:121px;top:260px;" width="6" height="6" viewBox="0 0 6 6"><path d="M5 0V5H0Z" fill="#d8d8d8"/></svg>
<svg class="a" style="left:46px;top:270px;" width="30" height="30" viewBox="0 0 30 30"><path d="M5 26L25 5" stroke="#c9c9c9" stroke-width="2"/></svg>
<svg class="a" style="left:76px;top:297px;" width="6" height="6" viewBox="0 0 6 6"><path d="M5 0V5H0Z" fill="#d8d8d8"/></svg>
<svg class="a" style="left:92px;top:270px;" width="30" height="30" viewBox="0 0 30 30"><rect x="5" y="7" width="20" height="16" fill="#757575" stroke="#c9c9c9" stroke-width="1.8"/></svg>
<svg class="a" style="left:121px;top:297px;" width="6" height="6" viewBox="0 0 6 6"><path d="M5 0V5H0Z" fill="#d8d8d8"/></svg>
<svg class="a" style="left:46px;top:306px;" width="30" height="30" viewBox="0 0 30 30"><path d="M12 18L25 5" stroke="#c9c9c9" stroke-width="3.5" stroke-linecap="round"/><path d="M4 25C6 21 8 17 13 18C14 22 10 25 4 25Z" fill="#c9c9c9"/></svg>
<svg class="a" style="left:92px;top:306px;" width="30" height="30" viewBox="0 0 30 30"><path d="M7 25L9 18L21 6L25 10L13 22Z" fill="#8c8c8c" stroke="#c9c9c9" stroke-width="1.6"/><path d="M20 7L24 11" stroke="#c9c9c9" stroke-width="4"/></svg>
<svg class="a" style="left:121px;top:333px;" width="6" height="6" viewBox="0 0 6 6"><path d="M5 0V5H0Z" fill="#d8d8d8"/></svg>
<svg class="a" style="left:46px;top:342px;" width="30" height="30" viewBox="0 0 30 30"><path d="M4 12H18V26H4Z" fill="#8c8c8c" stroke="#c9c9c9" stroke-width="1.5"/><path d="M12 18L25 5" stroke="#c9c9c9" stroke-width="3"/><path d="M8 20C10 16 13 15 15 17C14 20 11 21 8 20Z" fill="#333"/></svg>
<svg class="a" style="left:92px;top:342px;" width="30" height="30" viewBox="0 0 30 30"><path d="M4 24L4 18L16 9L25 9L25 15L14 24Z" fill="#8c8c8c" stroke="#c9c9c9" stroke-width="1.5"/><path d="M4 18L14 18L25 9M14 18V24" stroke="#c9c9c9" stroke-width="1.2" fill="none"/></svg>
<svg class="a" style="left:121px;top:369px;" width="6" height="6" viewBox="0 0 6 6"><path d="M5 0V5H0Z" fill="#d8d8d8"/></svg>
<svg class="a" style="left:46px;top:380px;" width="30" height="30" viewBox="0 0 30 30"><path d="M20 7A10 10 0 1 1 8 9" fill="none" stroke="#c9c9c9" stroke-width="2.2" stroke-dasharray="3 2.5"/><path d="M6 4L13 6L8 12Z" fill="#c9c9c9"/></svg>
<svg class="a" style="left:76px;top:407px;" width="6" height="6" viewBox="0 0 6 6"><path d="M5 0V5H0Z" fill="#d8d8d8"/></svg>
<svg class="a" style="left:92px;top:380px;" width="30" height="30" viewBox="0 0 30 30"><rect x="4" y="14" width="11" height="11" fill="none" stroke="#c9c9c9" stroke-width="1.5"/><rect x="10" y="5" width="15" height="14" fill="none" stroke="#c9c9c9" stroke-width="1.5"/><path d="M15 14L22 8M17 8H22V13" stroke="#c9c9c9" stroke-width="1.3" fill="none"/></svg>
<svg class="a" style="left:121px;top:407px;" width="6" height="6" viewBox="0 0 6 6"><path d="M5 0V5H0Z" fill="#d8d8d8"/></svg>
<svg class="a" style="left:46px;top:417px;" width="30" height="30" viewBox="0 0 30 30"><path d="M6 22C9 17 9 8 14 8C18 8 15 14 19 14C22 14 23 10 25 12C25 18 19 22 14 21C10 20 9 24 6 22Z" fill="#8c8c8c" stroke="#c9c9c9" stroke-width="1.3"/><circle cx="10" cy="18" r="2.5" fill="none" stroke="#fff" stroke-width="1.3"/><circle cx="5" cy="24" r="1.8" fill="none" stroke="#c9c9c9"/><circle cx="17" cy="9" r="1.8" fill="none" stroke="#c9c9c9"/></svg>
<svg class="a" style="left:76px;top:444px;" width="6" height="6" viewBox="0 0 6 6"><path d="M5 0V5H0Z" fill="#d8d8d8"/></svg>
<svg class="a" style="left:92px;top:417px;" width="30" height="30" viewBox="0 0 30 30"><rect x="10" y="8" width="15" height="15" fill="none" stroke="#c9c9c9" stroke-width="1.5" stroke-dasharray="2 2"/><path d="M4 5L4 22L9 17L17 17Z" fill="#c9c9c9"/></svg>
<svg class="a" style="left:46px;top:452px;" width="30" height="30" viewBox="0 0 30 30"><circle cx="11" cy="14" r="8" fill="#8c8c8c" stroke="#c9c9c9" stroke-width="1.2"/><circle cx="17" cy="14" r="8" fill="#8c8c8c" stroke="#c9c9c9" stroke-width="1.2"/><path d="M4 14H20" stroke="#fff" stroke-width="1.2" stroke-dasharray="2 1.5"/><path d="M18 14L18 27L21 24L27 25Z" fill="#c9c9c9"/></svg>
<svg class="a" style="left:76px;top:479px;" width="6" height="6" viewBox="0 0 6 6"><path d="M5 0V5H0Z" fill="#d8d8d8"/></svg>
<svg class="a" style="left:92px;top:452px;" width="30" height="30" viewBox="0 0 30 30"><path d="M5 4V26H26V21H16V16H11V9H5" fill="#8c8c8c" stroke="#c9c9c9" stroke-width="1.5"/><path d="M11 4V26M16 8V26M5 21H26M5 16H22" stroke="#c9c9c9" stroke-width="1.3"/></svg>
<svg class="a" style="left:121px;top:479px;" width="6" height="6" viewBox="0 0 6 6"><path d="M5 0V5H0Z" fill="#d8d8d8"/></svg>
<svg class="a" style="left:46px;top:491px;" width="30" height="30" viewBox="0 0 30 30"><rect x="4" y="6" width="22" height="18" fill="#8c8c8c" stroke="#c9c9c9" stroke-width="1.5"/><path d="M4 16C10 12 16 20 26 12M11 6C9 13 14 18 11 24M19 6C17 12 22 18 19 24" stroke="#eee" stroke-width="1.3" fill="none"/></svg>
<svg class="a" style="left:92px;top:491px;" width="30" height="30" viewBox="0 0 30 30"><defs><linearGradient id="gr1"><stop offset="0" stop-color="#3a3a3a"/><stop offset="1" stop-color="#dedede"/></linearGradient></defs><rect x="4" y="6" width="22" height="18" fill="url(#gr1)" stroke="#c9c9c9" stroke-width="1.5"/></svg>
<svg class="a" style="left:46px;top:527px;" width="30" height="30" viewBox="0 0 30 30"><path d="M6 25L7 20L17 10L20 13L10 23Z" fill="none" stroke="#c9c9c9" stroke-width="1.8"/><path d="M16 9L21 14M19 7L23 3L27 7L23 11Z" stroke="#c9c9c9" stroke-width="2.4" fill="#c9c9c9"/></svg>
<svg class="a" style="left:76px;top:554px;" width="6" height="6" viewBox="0 0 6 6"><path d="M5 0V5H0Z" fill="#d8d8d8"/></svg>
<svg class="a" style="left:92px;top:527px;" width="30" height="30" viewBox="0 0 30 30"><rect x="4" y="4" width="11" height="11" fill="#999" stroke="#c9c9c9" stroke-width="1.2"/><rect x="9" y="8" width="11" height="11" rx="2" fill="#777" stroke="#c9c9c9" stroke-width="1.2"/><circle cx="20" cy="19" r="7" fill="#666" stroke="#c9c9c9" stroke-width="1.8"/></svg>
<svg class="a" style="left:46px;top:567px;" width="30" height="30" viewBox="0 0 30 30"><rect x="11" y="10" width="13" height="17" fill="none" stroke="#c9c9c9" stroke-width="1.6"/><rect x="14" y="5" width="6" height="5" fill="#c9c9c9"/><circle cx="17.5" cy="19" r="3.5" fill="none" stroke="#c9c9c9" stroke-width="2"/><path d="M3 4h2M7 4h2M3 7h2M7 7h2M5 10h2M11 5h2" stroke="#aaa" stroke-width="1.8"/></svg>
<svg class="a" style="left:76px;top:594px;" width="6" height="6" viewBox="0 0 6 6"><path d="M5 0V5H0Z" fill="#d8d8d8"/></svg>
<svg class="a" style="left:92px;top:567px;" width="30" height="30" viewBox="0 0 30 30"><path d="M5 4V26H26" fill="none" stroke="#c9c9c9" stroke-width="1.6"/><rect x="8" y="16" width="4" height="9" fill="#c9c9c9"/><rect x="14" y="8" width="4" height="17" fill="#8c8c8c" stroke="#c9c9c9" stroke-width="1"/><rect x="20" y="12" width="4" height="13" fill="#c9c9c9"/></svg>
<svg class="a" style="left:121px;top:594px;" width="6" height="6" viewBox="0 0 6 6"><path d="M5 0V5H0Z" fill="#d8d8d8"/></svg>
<svg class="a" style="left:46px;top:606px;" width="30" height="30" viewBox="0 0 30 30"><rect x="8" y="8" width="14" height="14" fill="#8c8c8c" stroke="#c9c9c9" stroke-width="1.5"/><path d="M2 8H28M2 22H28M8 2V28M22 2V28" stroke="#c9c9c9" stroke-width="1.3"/></svg>
<svg class="a" style="left:92px;top:606px;" width="30" height="30" viewBox="0 0 30 30"><path d="M4 25L16 13L22 19Z" fill="#c9c9c9"/><path d="M17 12L24 5L27 10L22 18Z" fill="#999"/></svg>
<svg class="a" style="left:121px;top:633px;" width="6" height="6" viewBox="0 0 6 6"><path d="M5 0V5H0Z" fill="#d8d8d8"/></svg>
<svg class="a" style="left:46px;top:641px;" width="30" height="30" viewBox="0 0 30 30"><path d="M11 28L6 20L2 15.5C2 13.5 4 13 6 14.5L9 17L8 6C8 3.5 11 3.5 11 6L12.5 13L14 4C14 2 17 2 17 4L17.5 13L19.5 5C19.5 3 22.5 3 22.5 5L21.5 14L24 10C25 8.5 28 9.5 27 11.5L23 22L23 28Z" fill="#c4c4c4" stroke="#333" stroke-width="0.6"/></svg>
<svg class="a" style="left:76px;top:668px;" width="6" height="6" viewBox="0 0 6 6"><path d="M5 0V5H0Z" fill="#d8d8d8"/></svg>
<svg class="a" style="left:92px;top:641px;" width="30" height="30" viewBox="0 0 30 30"><circle cx="12" cy="12" r="8" fill="#8a8a8a" stroke="#c9c9c9" stroke-width="2.5"/><path d="M18 18L26 26" stroke="#c9c9c9" stroke-width="4" stroke-linecap="round"/></svg>
<div class="a" style="left:67px;top:708px;width:53px;height:53px;background:#000;border:2px solid #fff"></div>
<div class="a" style="left:79px;top:721px;width:28px;height:28px;border:2px solid #fff;background:#3e3e3e"></div>
<div class="a" style="left:40px;top:682px;width:52px;height:52px;background:#fff"></div>
<svg class="a" style="left:103px;top:681px;" width="18" height="18" viewBox="0 0 18 18"><path d="M4 5H11C13 5 14 6 14 8V14" fill="none" stroke="#c9c9c9" stroke-width="1.6"/><path d="M1 5L5 1V9Z M10 12H18L14 17Z" fill="#c9c9c9"/></svg>
<svg class="a" style="left:39px;top:743px;" width="18" height="19" viewBox="0 0 18 19"><rect x="6" y="7" width="11" height="11" fill="#222" stroke="#c9c9c9" stroke-width="1.4"/><rect x="1" y="1" width="10" height="10" fill="#ddd" stroke="#333" stroke-width="1"/></svg>
<div class="a" style="left:41px;top:774px;width:29px;height:29px;background:#3c3c3c;border:1px solid #333"></div>
<div class="a" style="left:72px;top:774px;width:29px;height:29px;background:#3c3c3c;border:1px solid #333"></div>
<div class="a" style="left:102px;top:774px;width:29px;height:29px;background:#3c3c3c;border:1px solid #333"></div>
<div class="a" style="left:41px;top:774px;width:29px;height:29px;background:#333;border:1px solid #2a2a2a"></div>
<div class="a" style="left:48px;top:778px;width:17px;height:20px;background:#fff;border:1px solid #222"></div>
<div class="a" style="left:77px;top:778px;width:19px;height:20px;background:linear-gradient(90deg,#eee,#222);border:1px solid #222"></div>
<svg class="a" style="left:107px;top:778px;" width="20" height="20" viewBox="0 0 20 20"><rect x="0.5" y="0.5" width="19" height="19" fill="#fff" stroke="#222"/><path d="M1 19L19 1" stroke="#e0102a" stroke-width="3"/></svg>
<div class="a" style="left:41px;top:811px;width:30px;height:24px;background:#353535;border:1px solid #2c2c2c"></div>
<div class="a" style="left:72px;top:811px;width:29px;height:24px;background:#545454;border:1px solid #2c2c2c"></div>
<div class="a" style="left:102px;top:811px;width:29px;height:24px;background:#545454;border:1px solid #2c2c2c"></div>
<svg class="a" style="left:46px;top:813px;" width="20" height="20" viewBox="0 0 20 20"><circle cx="9" cy="9" r="6" fill="#888" stroke="#c9c9c9" stroke-width="1.5"/><rect x="9" y="9" width="9" height="9" fill="#c9c9c9"/></svg>
<svg class="a" style="left:76px;top:813px;" width="22" height="20" viewBox="0 0 22 20"><circle cx="9" cy="9" r="6.5" fill="#888" stroke="#c9c9c9" stroke-width="1.5"/><path d="M19 11V19H11" fill="none" stroke="#c9c9c9" stroke-width="1.5"/></svg>
<svg class="a" style="left:107px;top:813px;" width="20" height="20" viewBox="0 0 20 20"><circle cx="10" cy="10" r="6.5" fill="#888" stroke="#c9c9c9" stroke-width="1.5"/><rect x="10" y="10" width="6" height="6" fill="#555" stroke="#c9c9c9" stroke-width="1.2"/></svg>
<svg class="a" style="left:65px;top:847px;" width="35" height="28" viewBox="0 0 35 28"><rect x="2" y="8" width="23" height="17" fill="none" stroke="#c9c9c9" stroke-width="1.6"/><rect x="10" y="2" width="23" height="17" fill="#838383" stroke="#c9c9c9" stroke-width="1.6"/></svg>
<div class="a" style="left:177px;top:43px;width:419px;height:992px;background:rgba(0,0,0,0.35);filter:blur(1.5px)"></div>
<div class="a" style="left:173px;top:39px;width:419px;height:992px;background:#f0f0f0;border:1px solid #979797"></div>
<div class="a" style="left:217px;top:40px;width:1px;height:990px;background:#e6e6e6"></div>
<div class="a" style="left:218px;top:40px;width:1px;height:990px;background:#f9f9f9"></div>
<div class="t" style="left:225px;top:51.06px;font-size:18px;line-height:18px;color:#1a1a1a;text-align:left;">Transform</div>
<svg class="a" style="left:568px;top:54.3px;" width="8" height="12" viewBox="0 0 8 12"><path d="M0.5 0.5 L7 6 L0.5 11.5Z" fill="#1a1a1a"/></svg>
<div class="t" style="left:225px;top:84.06px;font-size:18px;line-height:18px;color:#1a1a1a;text-align:left;">Arrange</div>
<svg class="a" style="left:568px;top:87.3px;" width="8" height="12" viewBox="0 0 8 12"><path d="M0.5 0.5 L7 6 L0.5 11.5Z" fill="#1a1a1a"/></svg>
<div class="a" style="left:219px;top:117px;width:371px;height:1px;background:#e2e3e3"></div>
<div class="a" style="left:219px;top:118px;width:371px;height:1px;background:#ffffff"></div>
<div class="t" style="left:225px;top:129.06px;font-size:18px;line-height:18px;color:#1a1a1a;text-align:left;">Group</div>
<div class="t" style="left:361px;top:129.06px;font-size:18px;line-height:18px;color:#1a1a1a;width:200px;text-align:right;">Ctrl+G</div>
<div class="t" style="left:225px;top:162.06px;font-size:18px;line-height:18px;color:#8d8d8d;text-align:left;">Ungroup</div>
<div class="t" style="left:361px;top:162.06px;font-size:18px;line-height:18px;color:#8d8d8d;width:200px;text-align:right;">Shift+Ctrl+G</div>
<div class="t" style="left:225px;top:195.06px;font-size:18px;line-height:18px;color:#1a1a1a;text-align:left;">Lock</div>
<svg class="a" style="left:568px;top:198.3px;" width="8" height="12" viewBox="0 0 8 12"><path d="M0.5 0.5 L7 6 L0.5 11.5Z" fill="#1a1a1a"/></svg>
<div class="t" style="left:225px;top:228.06px;font-size:18px;line-height:18px;color:#8d8d8d;text-align:left;">Unlock All</div>
<div class="t" style="left:361px;top:228.06px;font-size:18px;line-height:18px;color:#8d8d8d;width:200px;text-align:right;">Alt+Ctrl+2</div>
<div class="t" style="left:225px;top:261.06px;font-size:18px;line-height:18px;color:#1a1a1a;text-align:left;">Hide</div>
<svg class="a" style="left:568px;top:264.3px;" width="8" height="12" viewBox="0 0 8 12"><path d="M0.5 0.5 L7 6 L0.5 11.5Z" fill="#1a1a1a"/></svg>
<div class="t" style="left:225px;top:294.06px;font-size:18px;line-height:18px;color:#8d8d8d;text-align:left;">Show All</div>
<div class="t" style="left:361px;top:294.06px;font-size:18px;line-height:18px;color:#8d8d8d;width:200px;text-align:right;">Alt+Ctrl+3</div>
<div class="a" style="left:219px;top:327px;width:371px;height:1px;background:#e2e3e3"></div>
<div class="a" style="left:219px;top:328px;width:371px;height:1px;background:#ffffff"></div>
<div class="t" style="left:225px;top:339.06px;font-size:18px;line-height:18px;color:#1a1a1a;text-align:left;">Expand...</div>
<div class="t" style="left:225px;top:372.06px;font-size:18px;line-height:18px;color:#8d8d8d;text-align:left;">Expand Appearance</div>
<div class="t" style="left:225px;top:405.06px;font-size:18px;line-height:18px;color:#1a1a1a;text-align:left;">Rasterize...</div>
<div class="t" style="left:225px;top:438.06px;font-size:18px;line-height:18px;color:#1a1a1a;text-align:left;">Create Gradient Mesh...</div>
<div class="t" style="left:225px;top:471.06px;font-size:18px;line-height:18px;color:#8d8d8d;text-align:left;">Create Object Mosaic...</div>
<div class="t" style="left:225px;top:504.06px;font-size:18px;line-height:18px;color:#1a1a1a;text-align:left;">Flatten Transparency...</div>
<div class="a" style="left:219px;top:537px;width:371px;height:1px;background:#e2e3e3"></div>
<div class="a" style="left:219px;top:538px;width:371px;height:1px;background:#ffffff"></div>
<div class="t" style="left:225px;top:549.06px;font-size:18px;line-height:18px;color:#1a1a1a;text-align:left;">Slice</div>
<svg class="a" style="left:568px;top:552.3px;" width="8" height="12" viewBox="0 0 8 12"><path d="M0.5 0.5 L7 6 L0.5 11.5Z" fill="#1a1a1a"/></svg>
<div class="t" style="left:225px;top:582.06px;font-size:18px;line-height:18px;color:#1a1a1a;text-align:left;">Create Trim Marks</div>
<div class="a" style="left:219px;top:615px;width:371px;height:1px;background:#e2e3e3"></div>
<div class="a" style="left:219px;top:616px;width:371px;height:1px;background:#ffffff"></div>
<div class="a" style="left:178px;top:620px;width:420px;height:32px;border:1px solid #bdd5f2;border-radius:3px;background:linear-gradient(#f1f5fb,#e5ecf7)"></div>
<div class="t" style="left:225px;top:627.06px;font-size:18px;line-height:18px;color:#1a1a1a;text-align:left;">Path</div>
<svg class="a" style="left:568px;top:630.3px;" width="8" height="12" viewBox="0 0 8 12"><path d="M0.5 0.5 L7 6 L0.5 11.5Z" fill="#1a1a1a"/></svg>
<div class="t" style="left:225px;top:660.06px;font-size:18px;line-height:18px;color:#1a1a1a;text-align:left;">Pattern</div>
<svg class="a" style="left:568px;top:663.3px;" width="8" height="12" viewBox="0 0 8 12"><path d="M0.5 0.5 L7 6 L0.5 11.5Z" fill="#1a1a1a"/></svg>
<div class="t" style="left:225px;top:693.06px;font-size:18px;line-height:18px;color:#1a1a1a;text-align:left;">Blend</div>
<svg class="a" style="left:568px;top:696.3px;" width="8" height="12" viewBox="0 0 8 12"><path d="M0.5 0.5 L7 6 L0.5 11.5Z" fill="#1a1a1a"/></svg>
<div class="t" style="left:225px;top:726.06px;font-size:18px;line-height:18px;color:#1a1a1a;text-align:left;">Envelope Distort</div>
<svg class="a" style="left:568px;top:729.3px;" width="8" height="12" viewBox="0 0 8 12"><path d="M0.5 0.5 L7 6 L0.5 11.5Z" fill="#1a1a1a"/></svg>
<div class="t" style="left:225px;top:759.06px;font-size:18px;line-height:18px;color:#1a1a1a;text-align:left;">Perspective</div>
<svg class="a" style="left:568px;top:762.3px;" width="8" height="12" viewBox="0 0 8 12"><path d="M0.5 0.5 L7 6 L0.5 11.5Z" fill="#1a1a1a"/></svg>
<div class="t" style="left:225px;top:792.06px;font-size:18px;line-height:18px;color:#1a1a1a;text-align:left;">Live Paint</div>
<svg class="a" style="left:568px;top:795.3px;" width="8" height="12" viewBox="0 0 8 12"><path d="M0.5 0.5 L7 6 L0.5 11.5Z" fill="#1a1a1a"/></svg>
<div class="t" style="left:225px;top:825.06px;font-size:18px;line-height:18px;color:#1a1a1a;text-align:left;">Image Trace</div>
<svg class="a" style="left:568px;top:828.3px;" width="8" height="12" viewBox="0 0 8 12"><path d="M0.5 0.5 L7 6 L0.5 11.5Z" fill="#1a1a1a"/></svg>
<div class="t" style="left:225px;top:858.06px;font-size:18px;line-height:18px;color:#1a1a1a;text-align:left;">Text Wrap</div>
<svg class="a" style="left:568px;top:861.3px;" width="8" height="12" viewBox="0 0 8 12"><path d="M0.5 0.5 L7 6 L0.5 11.5Z" fill="#1a1a1a"/></svg>
<div class="a" style="left:219px;top:891px;width:371px;height:1px;background:#e2e3e3"></div>
<div class="a" style="left:219px;top:892px;width:371px;height:1px;background:#ffffff"></div>
<div class="t" style="left:225px;top:903.06px;font-size:18px;line-height:18px;color:#1a1a1a;text-align:left;">Clipping Mask</div>
<svg class="a" style="left:568px;top:906.3px;" width="8" height="12" viewBox="0 0 8 12"><path d="M0.5 0.5 L7 6 L0.5 11.5Z" fill="#1a1a1a"/></svg>
<div class="t" style="left:225px;top:936.06px;font-size:18px;line-height:18px;color:#1a1a1a;text-align:left;">Compound Path</div>
<svg class="a" style="left:568px;top:939.3px;" width="8" height="12" viewBox="0 0 8 12"><path d="M0.5 0.5 L7 6 L0.5 11.5Z" fill="#1a1a1a"/></svg>
<div class="t" style="left:225px;top:969.06px;font-size:18px;line-height:18px;color:#1a1a1a;text-align:left;">Artboards</div>
<svg class="a" style="left:568px;top:972.3px;" width="8" height="12" viewBox="0 0 8 12"><path d="M0.5 0.5 L7 6 L0.5 11.5Z" fill="#1a1a1a"/></svg>
<div class="t" style="left:225px;top:1002.06px;font-size:18px;line-height:18px;color:#1a1a1a;text-align:left;">Graph</div>
<svg class="a" style="left:568px;top:1005.3px;" width="8" height="12" viewBox="0 0 8 12"><path d="M0.5 0.5 L7 6 L0.5 11.5Z" fill="#1a1a1a"/></svg>
<div class="a" style="left:588px;top:619px;width:397px;height:386px;background:rgba(0,0,0,0.35);filter:blur(1.5px)"></div>
<div class="a" style="left:584px;top:615px;width:397px;height:386px;background:#f0f0f0;border:1px solid #979797"></div>
<div class="a" style="left:629px;top:616px;width:1px;height:384px;background:#e6e6e6"></div>
<div class="a" style="left:630px;top:616px;width:1px;height:384px;background:#f9f9f9"></div>
<div class="t" style="left:636px;top:627.06px;font-size:18px;line-height:18px;color:#1a1a1a;text-align:left;">Join</div>
<div class="t" style="left:749px;top:627.06px;font-size:18px;line-height:18px;color:#1a1a1a;width:200px;text-align:right;">Ctrl+J</div>
<div class="a" style="left:588px;top:653px;width:388px;height:32px;border:1px solid #bdd5f2;border-radius:3px;background:linear-gradient(#f1f5fb,#e5ecf7)"></div>
<div class="t" style="left:636px;top:660.06px;font-size:18px;line-height:18px;color:#1a1a1a;text-align:left;">Average...</div>
<div class="t" style="left:749px;top:660.06px;font-size:18px;line-height:18px;color:#1a1a1a;width:200px;text-align:right;">Alt+Ctrl+J</div>
<div class="a" style="left:631px;top:693px;width:348px;height:1px;background:#e2e3e3"></div>
<div class="a" style="left:631px;top:694px;width:348px;height:1px;background:#ffffff"></div>
<div class="t" style="left:636px;top:705.06px;font-size:18px;line-height:18px;color:#1a1a1a;text-align:left;">Outline Stroke</div>
<div class="t" style="left:636px;top:738.06px;font-size:18px;line-height:18px;color:#1a1a1a;text-align:left;">Offset Path...</div>
<div class="a" style="left:631px;top:771px;width:348px;height:1px;background:#e2e3e3"></div>
<div class="a" style="left:631px;top:772px;width:348px;height:1px;background:#ffffff"></div>
<div class="t" style="left:636px;top:783.06px;font-size:18px;line-height:18px;color:#1a1a1a;text-align:left;">Simplify...</div>
<div class="t" style="left:636px;top:816.06px;font-size:18px;line-height:18px;color:#1a1a1a;text-align:left;">Add Anchor Points</div>
<div class="t" style="left:636px;top:849.06px;font-size:18px;line-height:18px;color:#1a1a1a;text-align:left;">Remove Anchor Points</div>
<div class="t" style="left:636px;top:882.06px;font-size:18px;line-height:18px;color:#1a1a1a;text-align:left;">Divide Objects Below</div>
<div class="a" style="left:631px;top:915px;width:348px;height:1px;background:#e2e3e3"></div>
<div class="a" style="left:631px;top:916px;width:348px;height:1px;background:#ffffff"></div>
<div class="t" style="left:636px;top:927.06px;font-size:18px;line-height:18px;color:#1a1a1a;text-align:left;">Split Into Grid...</div>
<div class="a" style="left:631px;top:960px;width:348px;height:1px;background:#e2e3e3"></div>
<div class="a" style="left:631px;top:961px;width:348px;height:1px;background:#ffffff"></div>
<div class="t" style="left:636px;top:972.06px;font-size:18px;line-height:18px;color:#1a1a1a;text-align:left;">Clean Up...</div>
<svg class="a" style="left:699px;top:698px;" width="22" height="32" viewBox="0 0 22 32"><path d="M2.5 1.5L2.5 26L8.5 20.5L12.5 29L16.5 27.5L12.5 19L19 18.5Z" fill="#fff" stroke="#1a1a1a" stroke-width="1.6" stroke-linejoin="miter"/></svg></body></html>
